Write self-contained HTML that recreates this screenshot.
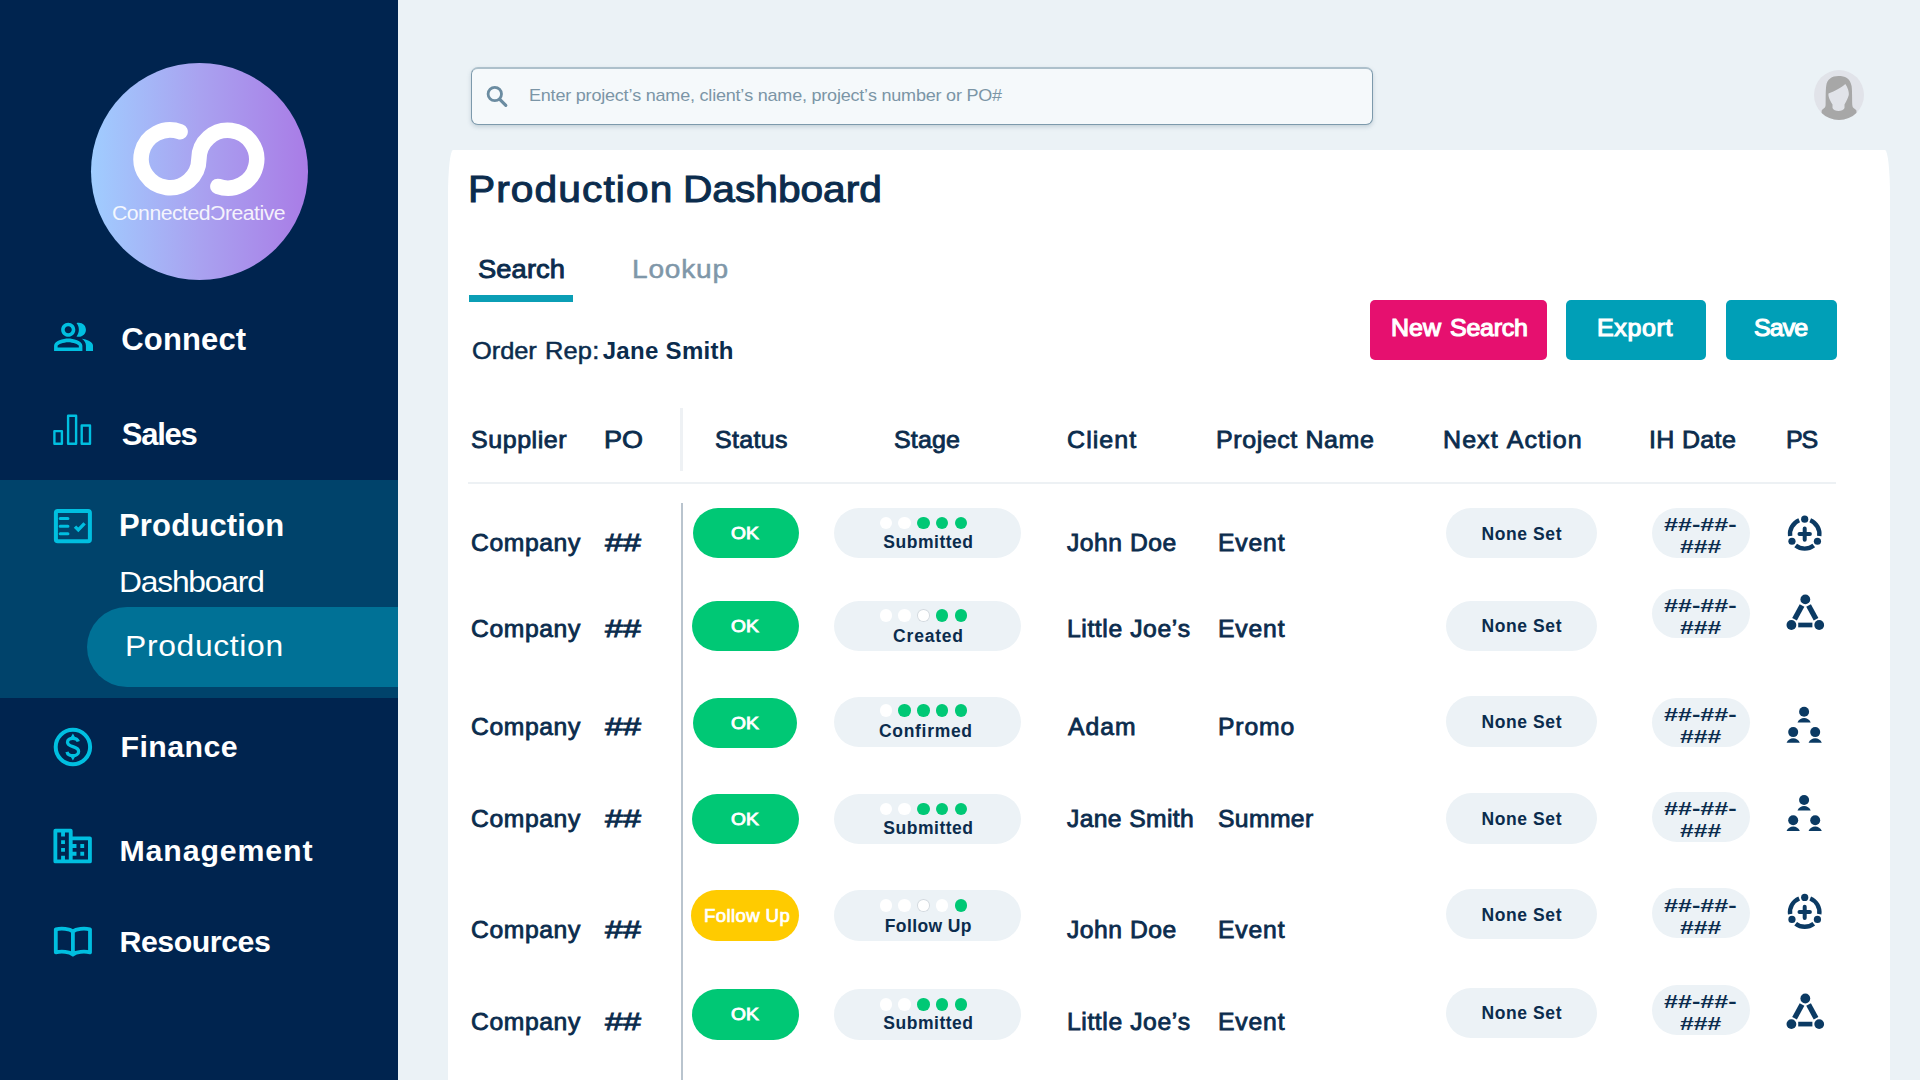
<!DOCTYPE html>
<html lang="en">
<head>
<meta charset="utf-8">
<title>Production Dashboard</title>
<style>
html,body{margin:0;padding:0;}
html{width:1920px;height:1080px;overflow:hidden;}
body{width:1920px;height:1080px;overflow:hidden;background:#ebf2f6;position:relative;
 font-family:"Liberation Sans",sans-serif;font-kerning:none;}
.t{position:absolute;white-space:nowrap;line-height:1;font-family:"Liberation Sans",sans-serif;}
.abs{position:absolute;}
#side{position:absolute;left:0;top:0;width:398px;height:1080px;background:#00244f;}
#prodsec{position:absolute;left:0;top:480px;width:398px;height:218px;background:#00436b;}
#prodpill{position:absolute;left:87px;top:607px;width:311px;height:80px;background:#007196;border-radius:40px 0 0 40px;}
#logo{position:absolute;left:91px;top:63px;width:217px;height:217px;border-radius:50%;
 background:linear-gradient(90deg,#a0cdff 0%,#a9a2f0 50%,#a97ce6 100%);}
#card{position:absolute;left:448px;top:150.3px;width:1442px;height:929.7px;background:#fff;border-radius:5px 5px 0 0 / 45px 45px 0 0;}
#search{position:absolute;left:470.7px;top:67.2px;width:900.2px;height:55.2px;border:1.6px solid #7d9aac;border-top:2px solid #adc0cb;border-radius:7px;background:#f5f9fb;box-shadow:0 2px 4px rgba(80,110,130,.25);}
.btn{position:absolute;top:300px;height:59.8px;border-radius:5px;}
.pill{position:absolute;border-radius:26px;background:#ecf2f6;}
.ok{position:absolute;border-radius:26px;background:#00c875;}
.fu{position:absolute;border-radius:26px;background:#ffcb00;}
.dot{position:absolute;width:12.5px;height:12.5px;border-radius:50%;background:#fff;}
.dot.g{background:#00c875;}
.dot.o{box-shadow:inset 0 0 0 1px #d3dae0;}
svg{position:absolute;overflow:visible;}
</style>
</head>
<body>
<div id="side"></div>
<div id="prodsec"></div>
<div id="prodpill"></div>
<div id="logo"></div>
<svg width="398" height="1080" viewBox="0 0 398 1080" style="left:0;top:0">
<path d="M180.1 131.8 A28.9 28.9 0 1 0 198.9 159.2 A28.9 28.9 0 1 1 217.9 186.4" fill="none" stroke="#fff" stroke-width="15.5" stroke-linecap="round"/>
<!-- connect icon -->
<g transform="translate(52.3 315.6) scale(1.77)" fill="#00bfe0">
<path d="M16.67 13.13C18.04 14.06 19 15.32 19 17v3h4v-3c0-2.18-3.57-3.47-6.33-3.87zM15 12c2.21 0 4-1.79 4-4s-1.79-4-4-4c-.47 0-.91.1-1.33.24C14.5 5.27 15 6.58 15 8s-.5 2.73-1.33 3.76c.42.14.86.24 1.33.24zM9 12c2.21 0 4-1.79 4-4s-1.79-4-4-4-4 1.79-4 4 1.79 4 4 4zm0-6c1.1 0 2 .9 2 2s-.9 2-2 2-2-.9-2-2 .9-2 2-2zM9 13c-2.67 0-8 1.34-8 4v3h16v-3c0-2.66-5.33-4-8-4zm6 5H3v-.99C3.2 16.29 6.3 15 9 15s5.8 1.29 6 2v1z"/>
</g>
<!-- sales icon -->
<g fill="none" stroke="#00bfe0" stroke-width="2.4" stroke-linejoin="round">
<rect x="54.4" y="431.1" width="7.5" height="12.6"/>
<rect x="68.1" y="415.8" width="8" height="27.9"/>
<rect x="81.7" y="425.5" width="8.3" height="18.2"/>
</g>
<!-- production icon -->
<g fill="none" stroke="#00bfe0">
<rect x="55.9" y="511" width="34" height="30.3" rx="1.8" stroke-width="4"/>
<path d="M60.2 518.5H67.9M60.2 526.2H67.9M60.2 533.7H67.9" stroke-width="3.1" stroke-linecap="round"/>
<path d="M75 526.6L78.3 529.9L84.6 523.4" stroke-width="3.4"/>
</g>
<!-- finance icon -->
<g fill="none" stroke="#00bfe0">
<circle cx="72.9" cy="747" r="17.2" stroke-width="4"/>
<path d="M78.3 741.6C77.6 739.4 75.7 738.3 72.9 738.3C69.7 738.3 67.5 739.9 67.5 742.3C67.5 747.9 78.6 745.4 78.6 751.4C78.6 754 76.2 755.7 72.9 755.7C69.8 755.7 67.6 754.3 67 751.8" stroke-width="3.3"/>
</g>
<path d="M70.6 737.5L72.9 733.6L75.2 737.5ZM70.6 756.5L72.9 760.4L75.2 756.5Z" fill="#00bfe0"/>
<!-- management icon -->
<g transform="translate(49.6 823) scale(1.92)" fill="#00bfe0">
<path fill-rule="evenodd" d="M3 3h8a1 1 0 0 1 1 1V7h9a1 1 0 0 1 1 1v12a1 1 0 0 1-1 1H3a1 1 0 0 1-1-1V4A1 1 0 0 1 3 3zM4 5h6v14H4zM6 5h2v2H6zM6 9h2v2H6zM6 13h2v2H6zM6 17h2v2H6zM12 9h8v10h-8zM12 11h2v2h-2zM12 15h2v2h-2zM16 11h2v2h-2zM16 15h2v2h-2z"/>
</g>
<!-- resources icon -->
<g fill="none" stroke="#00bfe0" stroke-width="3.8" stroke-linejoin="round" stroke-linecap="round">
<path d="M72.9 931.5C69.5 928.6 61.5 928.1 55.8 929.3V952.3C61.5 951.1 69.5 951.6 72.9 954.5C76.3 951.6 84.3 951.1 90 952.3V929.3C84.3 928.1 76.3 928.6 72.9 931.5V954.5"/>
</g>
</svg>
<div class="t" style="left:121.35px;top:324.00px;font-size:31px;font-weight:bold;letter-spacing:0.128px;color:#ffffff;">Connect</div>
<div class="t" style="left:121.72px;top:419.00px;font-size:31px;font-weight:bold;letter-spacing:-1.224px;color:#ffffff;">Sales</div>
<div class="t" style="left:118.94px;top:510.00px;font-size:31px;font-weight:bold;letter-spacing:0.182px;color:#ffffff;">Production</div>
<div class="t" style="left:119.12px;top:567.00px;font-size:30px;font-weight:normal;letter-spacing:-1.148px;color:#ffffff;transform-origin:0 0;transform:scaleX(1.0600);">Dashboard</div>
<div class="t" style="left:125.22px;top:631.00px;font-size:30px;font-weight:normal;letter-spacing:0.640px;color:#ffffff;transform-origin:0 0;transform:scaleX(1.0600);">Production</div>
<div class="t" style="left:120.60px;top:732.00px;font-size:30.3px;font-weight:bold;letter-spacing:0.413px;color:#ffffff;">Finance</div>
<div class="t" style="left:119.50px;top:836.00px;font-size:30.3px;font-weight:bold;letter-spacing:0.871px;color:#ffffff;">Management</div>
<div class="t" style="left:119.50px;top:927.00px;font-size:30.3px;font-weight:bold;letter-spacing:-0.453px;color:#ffffff;">Resources</div>
<div class="t" style="left:112.34px;top:203.00px;font-size:20px;font-weight:normal;letter-spacing:-0.466px;color:#ffffff;transform-origin:0 0;transform:scaleX(1.0600);opacity:.88;">Connected<span style="display:inline-block;transform:scaleX(-1)">C</span>reative</div>
<div id="search"></div>
<svg width="30" height="30" viewBox="0 0 30 30" style="left:480px;top:80px">
<circle cx="14.8" cy="14" r="6.7" fill="none" stroke="#6b8ca1" stroke-width="2.8"/>
<path d="M19.8 19.3L25.8 25.4" stroke="#6b8ca1" stroke-width="3.2" stroke-linecap="round"/>
</svg>
<div class="t" style="left:528.94px;top:87.00px;font-size:17px;font-weight:normal;letter-spacing:-0.202px;color:#7b95a6;transform-origin:0 0;transform:scaleX(1.0600);">Enter project’s name, client’s name, project’s number or PO#</div>
<svg width="52" height="52" viewBox="0 0 52 52" style="left:1813px;top:68.7px">
<defs><clipPath id="avc"><circle cx="26" cy="26" r="25"/></clipPath></defs>
<circle cx="26" cy="26" r="25" fill="#e1e3e9"/>
<g clip-path="url(#avc)">
<path d="M8 52L8.7 41.5C10 39 12.3 40 12.6 36C12.8 30 12.5 22 13.2 17C14 10 19 7 25.5 7C32 7 37 9 38.6 17C39.3 22 39 30 39.3 36C39.6 40 42 39 43.4 41.5L44 52Z" fill="#a7a7a7"/>
<path d="M32.3 15C29 18 22 22 15.5 24.5C15 28 17 31 19.5 35.5L19.5 39C21 43 30 43 31.5 39L31.5 35.5C33.5 32 35 29 35.8 26C36.3 23 34.5 18 32.3 15Z" fill="#e1e3e9"/>
</g>
</svg>
<div id="card"></div>
<div class="t" style="left:468.20px;top:171.00px;font-size:37px;font-weight:normal;letter-spacing:0.985px;color:#0b2c4d;-webkit-text-stroke:1.00px #0b2c4d;transform-origin:0 0;transform:scaleX(1.1000);">Production</div>
<div class="t" style="left:682.60px;top:171.00px;font-size:37px;font-weight:normal;letter-spacing:-0.029px;color:#0b2c4d;-webkit-text-stroke:1.00px #0b2c4d;transform-origin:0 0;transform:scaleX(1.1000);">Dashboard</div>
<div class="t" style="left:478.06px;top:257.00px;font-size:25.8px;font-weight:normal;letter-spacing:0.076px;color:#0b2c4d;-webkit-text-stroke:0.90px #0b2c4d;transform-origin:0 0;transform:scaleX(1.0600);">Search</div>
<div class="abs" style="left:468.7px;top:294.9px;width:104.6px;height:7.1px;background:#0b9eb5"></div>
<div class="t" style="left:631.80px;top:256.00px;font-size:26.5px;font-weight:normal;letter-spacing:0.731px;color:#7f97a9;-webkit-text-stroke:0.50px #7f97a9;transform-origin:0 0;transform:scaleX(1.0600);">Lookup</div>
<div class="t" style="left:471.56px;top:339.00px;font-size:24px;font-weight:normal;letter-spacing:-0.058px;color:#0b2c4d;-webkit-text-stroke:0.50px #0b2c4d;transform-origin:0 0;transform:scaleX(1.0600);">Order</div>
<div class="t" style="left:545.20px;top:339.00px;font-size:24px;font-weight:normal;letter-spacing:0.162px;color:#0b2c4d;-webkit-text-stroke:0.50px #0b2c4d;transform-origin:0 0;transform:scaleX(1.0600);">Rep:</div>
<div class="t" style="left:602.69px;top:339.00px;font-size:24px;font-weight:bold;letter-spacing:0.305px;color:#0b2c4d;">Jane Smith</div>
<div class="btn" style="left:1369.5px;width:177.3px;background:#e6106f"></div>
<div class="btn" style="left:1566.3px;width:139.8px;background:#009fb7"></div>
<div class="btn" style="left:1725.6px;width:111.7px;background:#009fb7"></div>
<div class="t" style="left:1390.80px;top:317.00px;font-size:23.6px;font-weight:normal;letter-spacing:0.058px;color:#ffffff;-webkit-text-stroke:1.10px #ffffff;transform-origin:0 0;transform:scaleX(1.0600);">New</div>
<div class="t" style="left:1449.72px;top:317.00px;font-size:23.6px;font-weight:normal;letter-spacing:-0.254px;color:#ffffff;-webkit-text-stroke:1.10px #ffffff;transform-origin:0 0;transform:scaleX(1.0600);">Search</div>
<div class="t" style="left:1597.40px;top:317.00px;font-size:23.6px;font-weight:normal;letter-spacing:0.600px;color:#ffffff;-webkit-text-stroke:1.10px #ffffff;transform-origin:0 0;transform:scaleX(1.0600);">Export</div>
<div class="t" style="left:1754.42px;top:317.00px;font-size:23.6px;font-weight:normal;letter-spacing:-0.859px;color:#ffffff;-webkit-text-stroke:1.10px #ffffff;transform-origin:0 0;transform:scaleX(1.0600);">Save</div>
<div class="t" style="left:471.17px;top:429.00px;font-size:23.6px;font-weight:normal;letter-spacing:0.516px;color:#0b2c4d;-webkit-text-stroke:0.80px #0b2c4d;transform-origin:0 0;transform:scaleX(1.0600);">Supplier</div>
<div class="t" style="left:604.39px;top:429.00px;font-size:23.6px;font-weight:normal;letter-spacing:0.000px;color:#0b2c4d;-webkit-text-stroke:0.80px #0b2c4d;transform-origin:0 0;transform:scaleX(1.1432);">PO</div>
<div class="t" style="left:715.47px;top:429.00px;font-size:23.6px;font-weight:normal;letter-spacing:0.293px;color:#0b2c4d;-webkit-text-stroke:0.80px #0b2c4d;transform-origin:0 0;transform:scaleX(1.0600);">Status</div>
<div class="t" style="left:893.57px;top:429.00px;font-size:23.6px;font-weight:normal;letter-spacing:0.121px;color:#0b2c4d;-webkit-text-stroke:0.80px #0b2c4d;transform-origin:0 0;transform:scaleX(1.0600);">Stage</div>
<div class="t" style="left:1066.64px;top:429.00px;font-size:23.6px;font-weight:normal;letter-spacing:1.005px;color:#0b2c4d;-webkit-text-stroke:0.80px #0b2c4d;transform-origin:0 0;transform:scaleX(1.0600);">Client</div>
<div class="t" style="left:1216.35px;top:429.00px;font-size:23.6px;font-weight:normal;letter-spacing:0.547px;color:#0b2c4d;-webkit-text-stroke:0.80px #0b2c4d;transform-origin:0 0;transform:scaleX(1.0600);">Project Name</div>
<div class="t" style="left:1443.15px;top:429.00px;font-size:23.6px;font-weight:normal;letter-spacing:1.012px;color:#0b2c4d;-webkit-text-stroke:0.80px #0b2c4d;transform-origin:0 0;transform:scaleX(1.0600);">Next Action</div>
<div class="t" style="left:1648.85px;top:429.00px;font-size:23.6px;font-weight:normal;letter-spacing:0.315px;color:#0b2c4d;-webkit-text-stroke:0.80px #0b2c4d;transform-origin:0 0;transform:scaleX(1.0600);">IH Date</div>
<div class="t" style="left:1785.85px;top:429.00px;font-size:23.6px;font-weight:normal;letter-spacing:-1.227px;color:#0b2c4d;-webkit-text-stroke:0.80px #0b2c4d;transform-origin:0 0;transform:scaleX(1.0600);">PS</div>
<div class="abs" style="left:680.2px;top:408px;width:2.4px;height:63px;background:#eef1f4"></div>
<div class="abs" style="left:468px;top:481.6px;width:1368px;height:2.4px;background:#edf1f4"></div>
<div class="abs" style="left:681px;top:502.6px;width:1.8px;height:577.4px;background:#b9c4ce"></div>
<div class="t" style="left:470.61px;top:532.00px;font-size:23.3px;font-weight:normal;letter-spacing:0.569px;color:#0b2c4d;-webkit-text-stroke:0.80px #0b2c4d;transform-origin:0 0;transform:scaleX(1.0600);">Company</div>
<div class="t" style="left:605.41px;top:532.00px;font-size:23.3px;font-weight:normal;letter-spacing:0.000px;color:#0b2c4d;-webkit-text-stroke:0.80px #0b2c4d;transform-origin:0 0;transform:scaleX(1.3892);">##</div>
<div class="ok" style="left:693.1px;top:508.1px;width:106.0px;height:50.0px"></div>
<div class="t" style="left:731.40px;top:525.00px;font-size:17px;font-weight:normal;letter-spacing:0.000px;color:#ffffff;-webkit-text-stroke:0.90px #ffffff;transform-origin:0 0;transform:scaleX(1.1284);">OK</div>
<div class="pill" style="left:833.8px;top:508.1px;width:187.1px;height:50.0px"></div>
<div class="dot" style="left:879.65px;top:516.55px"></div><div class="dot" style="left:898.45px;top:516.55px"></div><div class="dot g" style="left:917.15px;top:516.55px"></div><div class="dot g" style="left:935.95px;top:516.55px"></div><div class="dot g" style="left:954.65px;top:516.55px"></div>
<div class="t" style="left:883.30px;top:534.00px;font-size:17.5px;font-weight:bold;letter-spacing:0.522px;color:#0b2c4d;">Submitted</div>
<div class="t" style="left:1067.37px;top:532.00px;font-size:23.3px;font-weight:normal;letter-spacing:0.484px;color:#0b2c4d;-webkit-text-stroke:0.80px #0b2c4d;transform-origin:0 0;transform:scaleX(1.0600);">John Doe</div>
<div class="t" style="left:1218.21px;top:532.00px;font-size:23.3px;font-weight:normal;letter-spacing:0.802px;color:#0b2c4d;-webkit-text-stroke:0.80px #0b2c4d;transform-origin:0 0;transform:scaleX(1.0600);">Event</div>
<div class="pill" style="left:1445.6px;top:508.0px;width:151.7px;height:50.2px"></div>
<div class="t" style="left:1481.58px;top:526.00px;font-size:17.5px;font-weight:bold;letter-spacing:0.583px;color:#0b2c4d;">None Set</div>
<div class="pill" style="left:1652.3px;top:508.0px;width:97.5px;height:49.8px"></div>
<div class="t" style="left:1664.45px;top:516.00px;font-size:18px;font-weight:bold;letter-spacing:0.000px;color:#0b2c4d;transform-origin:0 0;transform:scaleX(1.3973);">##-##-</div>
<div class="t" style="left:1680.06px;top:538.00px;font-size:18px;font-weight:bold;letter-spacing:0.000px;color:#0b2c4d;transform-origin:0 0;transform:scaleX(1.3787);">###</div>
<div class="t" style="left:470.61px;top:618.00px;font-size:23.3px;font-weight:normal;letter-spacing:0.569px;color:#0b2c4d;-webkit-text-stroke:0.80px #0b2c4d;transform-origin:0 0;transform:scaleX(1.0600);">Company</div>
<div class="t" style="left:605.41px;top:618.00px;font-size:23.3px;font-weight:normal;letter-spacing:0.000px;color:#0b2c4d;-webkit-text-stroke:0.80px #0b2c4d;transform-origin:0 0;transform:scaleX(1.3892);">##</div>
<div class="ok" style="left:692.2px;top:600.9px;width:106.9px;height:50.6px"></div>
<div class="t" style="left:731.40px;top:618.00px;font-size:17px;font-weight:normal;letter-spacing:0.000px;color:#ffffff;-webkit-text-stroke:0.90px #ffffff;transform-origin:0 0;transform:scaleX(1.1284);">OK</div>
<div class="pill" style="left:833.8px;top:600.9px;width:187.1px;height:50.6px"></div>
<div class="dot" style="left:879.65px;top:609.35px"></div><div class="dot" style="left:898.45px;top:609.35px"></div><div class="dot o" style="left:917.15px;top:609.35px"></div><div class="dot g" style="left:935.95px;top:609.35px"></div><div class="dot g" style="left:954.65px;top:609.35px"></div>
<div class="t" style="left:893.11px;top:628.00px;font-size:17.5px;font-weight:bold;letter-spacing:0.792px;color:#0b2c4d;">Created</div>
<div class="t" style="left:1067.21px;top:618.00px;font-size:23.3px;font-weight:normal;letter-spacing:0.559px;color:#0b2c4d;-webkit-text-stroke:0.80px #0b2c4d;transform-origin:0 0;transform:scaleX(1.0600);">Little Joe’s</div>
<div class="t" style="left:1218.21px;top:618.00px;font-size:23.3px;font-weight:normal;letter-spacing:0.802px;color:#0b2c4d;-webkit-text-stroke:0.80px #0b2c4d;transform-origin:0 0;transform:scaleX(1.0600);">Event</div>
<div class="pill" style="left:1445.6px;top:600.7px;width:151.7px;height:50.7px"></div>
<div class="t" style="left:1481.58px;top:618.00px;font-size:17.5px;font-weight:bold;letter-spacing:0.583px;color:#0b2c4d;">None Set</div>
<div class="pill" style="left:1652.3px;top:588.7px;width:97.5px;height:49.8px"></div>
<div class="t" style="left:1664.45px;top:597.00px;font-size:18px;font-weight:bold;letter-spacing:0.000px;color:#0b2c4d;transform-origin:0 0;transform:scaleX(1.3973);">##-##-</div>
<div class="t" style="left:1680.06px;top:619.00px;font-size:18px;font-weight:bold;letter-spacing:0.000px;color:#0b2c4d;transform-origin:0 0;transform:scaleX(1.3787);">###</div>
<div class="t" style="left:470.61px;top:716.00px;font-size:23.3px;font-weight:normal;letter-spacing:0.569px;color:#0b2c4d;-webkit-text-stroke:0.80px #0b2c4d;transform-origin:0 0;transform:scaleX(1.0600);">Company</div>
<div class="t" style="left:605.41px;top:716.00px;font-size:23.3px;font-weight:normal;letter-spacing:0.000px;color:#0b2c4d;-webkit-text-stroke:0.80px #0b2c4d;transform-origin:0 0;transform:scaleX(1.3892);">##</div>
<div class="ok" style="left:693.1px;top:698.1px;width:104.4px;height:49.7px"></div>
<div class="t" style="left:731.40px;top:715.00px;font-size:17px;font-weight:normal;letter-spacing:0.000px;color:#ffffff;-webkit-text-stroke:0.90px #ffffff;transform-origin:0 0;transform:scaleX(1.1284);">OK</div>
<div class="pill" style="left:833.8px;top:696.6px;width:187.1px;height:50.6px"></div>
<div class="dot" style="left:879.65px;top:704.35px"></div><div class="dot g" style="left:898.45px;top:704.35px"></div><div class="dot g" style="left:917.15px;top:704.35px"></div><div class="dot g" style="left:935.95px;top:704.35px"></div><div class="dot g" style="left:954.65px;top:704.35px"></div>
<div class="t" style="left:879.01px;top:723.00px;font-size:17.5px;font-weight:bold;letter-spacing:0.689px;color:#0b2c4d;">Confirmed</div>
<div class="t" style="left:1068.10px;top:716.00px;font-size:23.3px;font-weight:normal;letter-spacing:0.925px;color:#0b2c4d;-webkit-text-stroke:0.80px #0b2c4d;transform-origin:0 0;transform:scaleX(1.0600);">Adam</div>
<div class="t" style="left:1218.21px;top:716.00px;font-size:23.3px;font-weight:normal;letter-spacing:0.816px;color:#0b2c4d;-webkit-text-stroke:0.80px #0b2c4d;transform-origin:0 0;transform:scaleX(1.0600);">Promo</div>
<div class="pill" style="left:1445.6px;top:696.4px;width:151.7px;height:50.2px"></div>
<div class="t" style="left:1481.58px;top:714.00px;font-size:17.5px;font-weight:bold;letter-spacing:0.583px;color:#0b2c4d;">None Set</div>
<div class="pill" style="left:1652.3px;top:697.6px;width:97.5px;height:49.8px"></div>
<div class="t" style="left:1664.45px;top:706.00px;font-size:18px;font-weight:bold;letter-spacing:0.000px;color:#0b2c4d;transform-origin:0 0;transform:scaleX(1.3973);">##-##-</div>
<div class="t" style="left:1680.06px;top:728.00px;font-size:18px;font-weight:bold;letter-spacing:0.000px;color:#0b2c4d;transform-origin:0 0;transform:scaleX(1.3787);">###</div>
<div class="t" style="left:470.61px;top:808.00px;font-size:23.3px;font-weight:normal;letter-spacing:0.569px;color:#0b2c4d;-webkit-text-stroke:0.80px #0b2c4d;transform-origin:0 0;transform:scaleX(1.0600);">Company</div>
<div class="t" style="left:605.41px;top:808.00px;font-size:23.3px;font-weight:normal;letter-spacing:0.000px;color:#0b2c4d;-webkit-text-stroke:0.80px #0b2c4d;transform-origin:0 0;transform:scaleX(1.3892);">##</div>
<div class="ok" style="left:691.6px;top:794.0px;width:107.4px;height:50.0px"></div>
<div class="t" style="left:731.40px;top:811.00px;font-size:17px;font-weight:normal;letter-spacing:0.000px;color:#ffffff;-webkit-text-stroke:0.90px #ffffff;transform-origin:0 0;transform:scaleX(1.1284);">OK</div>
<div class="pill" style="left:833.8px;top:794.0px;width:187.1px;height:50.0px"></div>
<div class="dot" style="left:879.65px;top:802.75px"></div><div class="dot" style="left:898.45px;top:802.75px"></div><div class="dot g" style="left:917.15px;top:802.75px"></div><div class="dot g" style="left:935.95px;top:802.75px"></div><div class="dot g" style="left:954.65px;top:802.75px"></div>
<div class="t" style="left:883.30px;top:820.00px;font-size:17.5px;font-weight:bold;letter-spacing:0.522px;color:#0b2c4d;">Submitted</div>
<div class="t" style="left:1066.77px;top:808.00px;font-size:23.3px;font-weight:normal;letter-spacing:0.328px;color:#0b2c4d;-webkit-text-stroke:0.80px #0b2c4d;transform-origin:0 0;transform:scaleX(1.0600);">Jane Smith</div>
<div class="t" style="left:1217.64px;top:808.00px;font-size:23.3px;font-weight:normal;letter-spacing:0.356px;color:#0b2c4d;-webkit-text-stroke:0.80px #0b2c4d;transform-origin:0 0;transform:scaleX(1.0600);">Summer</div>
<div class="pill" style="left:1445.6px;top:793.4px;width:151.7px;height:50.7px"></div>
<div class="t" style="left:1481.58px;top:811.00px;font-size:17.5px;font-weight:bold;letter-spacing:0.583px;color:#0b2c4d;">None Set</div>
<div class="pill" style="left:1652.3px;top:792.2px;width:97.5px;height:49.8px"></div>
<div class="t" style="left:1664.45px;top:800.00px;font-size:18px;font-weight:bold;letter-spacing:0.000px;color:#0b2c4d;transform-origin:0 0;transform:scaleX(1.3973);">##-##-</div>
<div class="t" style="left:1680.06px;top:822.00px;font-size:18px;font-weight:bold;letter-spacing:0.000px;color:#0b2c4d;transform-origin:0 0;transform:scaleX(1.3787);">###</div>
<div class="t" style="left:470.61px;top:919.00px;font-size:23.3px;font-weight:normal;letter-spacing:0.569px;color:#0b2c4d;-webkit-text-stroke:0.80px #0b2c4d;transform-origin:0 0;transform:scaleX(1.0600);">Company</div>
<div class="t" style="left:605.41px;top:919.00px;font-size:23.3px;font-weight:normal;letter-spacing:0.000px;color:#0b2c4d;-webkit-text-stroke:0.80px #0b2c4d;transform-origin:0 0;transform:scaleX(1.3892);">##</div>
<div class="fu" style="left:691.2px;top:890.3px;width:107.5px;height:50.9px"></div>
<div class="t" style="left:703.83px;top:908.00px;font-size:17.6px;font-weight:normal;letter-spacing:0.336px;color:#ffffff;-webkit-text-stroke:0.70px #ffffff;transform-origin:0 0;transform:scaleX(1.0600);">Follow Up</div>
<div class="pill" style="left:833.8px;top:890.3px;width:187.1px;height:50.9px"></div>
<div class="dot" style="left:879.65px;top:899.05px"></div><div class="dot" style="left:898.45px;top:899.05px"></div><div class="dot o" style="left:917.15px;top:899.05px"></div><div class="dot" style="left:935.95px;top:899.05px"></div><div class="dot g" style="left:954.65px;top:899.05px"></div>
<div class="t" style="left:884.77px;top:918.00px;font-size:17.5px;font-weight:bold;letter-spacing:0.390px;color:#0b2c4d;">Follow Up</div>
<div class="t" style="left:1067.37px;top:919.00px;font-size:23.3px;font-weight:normal;letter-spacing:0.484px;color:#0b2c4d;-webkit-text-stroke:0.80px #0b2c4d;transform-origin:0 0;transform:scaleX(1.0600);">John Doe</div>
<div class="t" style="left:1218.21px;top:919.00px;font-size:23.3px;font-weight:normal;letter-spacing:0.802px;color:#0b2c4d;-webkit-text-stroke:0.80px #0b2c4d;transform-origin:0 0;transform:scaleX(1.0600);">Event</div>
<div class="pill" style="left:1445.6px;top:888.7px;width:151.7px;height:50.8px"></div>
<div class="t" style="left:1481.58px;top:907.00px;font-size:17.5px;font-weight:bold;letter-spacing:0.583px;color:#0b2c4d;">None Set</div>
<div class="pill" style="left:1652.3px;top:888.0px;width:97.5px;height:50.3px"></div>
<div class="t" style="left:1664.45px;top:897.00px;font-size:18px;font-weight:bold;letter-spacing:0.000px;color:#0b2c4d;transform-origin:0 0;transform:scaleX(1.3973);">##-##-</div>
<div class="t" style="left:1680.06px;top:919.00px;font-size:18px;font-weight:bold;letter-spacing:0.000px;color:#0b2c4d;transform-origin:0 0;transform:scaleX(1.3787);">###</div>
<div class="t" style="left:470.61px;top:1011.00px;font-size:23.3px;font-weight:normal;letter-spacing:0.569px;color:#0b2c4d;-webkit-text-stroke:0.80px #0b2c4d;transform-origin:0 0;transform:scaleX(1.0600);">Company</div>
<div class="t" style="left:605.41px;top:1011.00px;font-size:23.3px;font-weight:normal;letter-spacing:0.000px;color:#0b2c4d;-webkit-text-stroke:0.80px #0b2c4d;transform-origin:0 0;transform:scaleX(1.3892);">##</div>
<div class="ok" style="left:691.6px;top:988.8px;width:107.4px;height:50.8px"></div>
<div class="t" style="left:731.40px;top:1006.00px;font-size:17px;font-weight:normal;letter-spacing:0.000px;color:#ffffff;-webkit-text-stroke:0.90px #ffffff;transform-origin:0 0;transform:scaleX(1.1284);">OK</div>
<div class="pill" style="left:833.8px;top:988.8px;width:187.1px;height:50.8px"></div>
<div class="dot" style="left:879.65px;top:998.15px"></div><div class="dot" style="left:898.45px;top:998.15px"></div><div class="dot g" style="left:917.15px;top:998.15px"></div><div class="dot g" style="left:935.95px;top:998.15px"></div><div class="dot g" style="left:954.65px;top:998.15px"></div>
<div class="t" style="left:883.30px;top:1015.00px;font-size:17.5px;font-weight:bold;letter-spacing:0.522px;color:#0b2c4d;">Submitted</div>
<div class="t" style="left:1067.21px;top:1011.00px;font-size:23.3px;font-weight:normal;letter-spacing:0.559px;color:#0b2c4d;-webkit-text-stroke:0.80px #0b2c4d;transform-origin:0 0;transform:scaleX(1.0600);">Little Joe’s</div>
<div class="t" style="left:1218.21px;top:1011.00px;font-size:23.3px;font-weight:normal;letter-spacing:0.802px;color:#0b2c4d;-webkit-text-stroke:0.80px #0b2c4d;transform-origin:0 0;transform:scaleX(1.0600);">Event</div>
<div class="pill" style="left:1445.6px;top:987.5px;width:151.7px;height:50.7px"></div>
<div class="t" style="left:1481.58px;top:1005.00px;font-size:17.5px;font-weight:bold;letter-spacing:0.583px;color:#0b2c4d;">None Set</div>
<div class="pill" style="left:1652.3px;top:985.0px;width:97.5px;height:50.4px"></div>
<div class="t" style="left:1664.45px;top:993.00px;font-size:18px;font-weight:bold;letter-spacing:0.000px;color:#0b2c4d;transform-origin:0 0;transform:scaleX(1.3973);">##-##-</div>
<div class="t" style="left:1680.06px;top:1015.00px;font-size:18px;font-weight:bold;letter-spacing:0.000px;color:#0b2c4d;transform-origin:0 0;transform:scaleX(1.3787);">###</div>
<svg width="1920" height="1080" viewBox="0 0 1920 1080" style="left:0;top:0">
<g><path d="M1810.21 520.27A14.7 14.7 0 0 1 1819.26 535.95" fill="none" stroke="#0b3a63" stroke-width="4.4"/><circle cx="1804.70" cy="519.20" r="3.6" fill="#0b3a63"/><path d="M1813.75 545.48A14.7 14.7 0 0 1 1795.65 545.48" fill="none" stroke="#0b3a63" stroke-width="4.4"/><circle cx="1817.43" cy="541.25" r="3.6" fill="#0b3a63"/><path d="M1790.14 535.95A14.7 14.7 0 0 1 1799.19 520.27" fill="none" stroke="#0b3a63" stroke-width="4.4"/><circle cx="1791.97" cy="541.25" r="3.6" fill="#0b3a63"/><path d="M1799.50 533.90H1809.90M1804.70 528.50V539.70" stroke="#0b3a63" stroke-width="4" stroke-linecap="round"/></g>
<g fill="#0b3a63" stroke="#0b3a63"><circle cx="1805.30" cy="599.40" r="4.9" stroke="none"/><circle cx="1791.40" cy="625.00" r="4.9" stroke="none"/><circle cx="1819.20" cy="625.00" r="4.9" stroke="none"/><path d="M1802.03 605.42L1794.53 619.24" stroke-width="5.3" fill="none"/><path d="M1808.57 605.42L1816.07 619.24" stroke-width="5.3" fill="none"/><path d="M1798.21 625.00L1812.39 625.00" stroke-width="4.7" fill="none"/></g>
<g fill="#0b3a63"><circle cx="1804.10" cy="711.80" r="5"/><path d="M1797.50 722.40C1799.60 716.40 1808.60 716.40 1810.70 722.40Z"/><circle cx="1793.20" cy="732.10" r="5"/><path d="M1786.60 742.70C1788.70 736.70 1797.70 736.70 1799.80 742.70Z"/><circle cx="1815.20" cy="732.10" r="5"/><path d="M1808.60 742.70C1810.70 736.70 1819.70 736.70 1821.80 742.70Z"/></g>
<g fill="#0b3a63"><circle cx="1804.10" cy="800.00" r="5"/><path d="M1797.50 810.60C1799.60 804.60 1808.60 804.60 1810.70 810.60Z"/><circle cx="1793.20" cy="820.30" r="5"/><path d="M1786.60 830.90C1788.70 824.90 1797.70 824.90 1799.80 830.90Z"/><circle cx="1815.20" cy="820.30" r="5"/><path d="M1808.60 830.90C1810.70 824.90 1819.70 824.90 1821.80 830.90Z"/></g>
<g><path d="M1810.21 898.47A14.7 14.7 0 0 1 1819.26 914.15" fill="none" stroke="#0b3a63" stroke-width="4.4"/><circle cx="1804.70" cy="897.40" r="3.6" fill="#0b3a63"/><path d="M1813.75 923.68A14.7 14.7 0 0 1 1795.65 923.68" fill="none" stroke="#0b3a63" stroke-width="4.4"/><circle cx="1817.43" cy="919.45" r="3.6" fill="#0b3a63"/><path d="M1790.14 914.15A14.7 14.7 0 0 1 1799.19 898.47" fill="none" stroke="#0b3a63" stroke-width="4.4"/><circle cx="1791.97" cy="919.45" r="3.6" fill="#0b3a63"/><path d="M1799.50 912.10H1809.90M1804.70 906.70V917.90" stroke="#0b3a63" stroke-width="4" stroke-linecap="round"/></g>
<g fill="#0b3a63" stroke="#0b3a63"><circle cx="1805.30" cy="998.50" r="4.9" stroke="none"/><circle cx="1791.40" cy="1024.10" r="4.9" stroke="none"/><circle cx="1819.20" cy="1024.10" r="4.9" stroke="none"/><path d="M1802.03 1004.52L1794.53 1018.34" stroke-width="5.3" fill="none"/><path d="M1808.57 1004.52L1816.07 1018.34" stroke-width="5.3" fill="none"/><path d="M1798.21 1024.10L1812.39 1024.10" stroke-width="4.7" fill="none"/></g>
</svg>
</body>
</html>
